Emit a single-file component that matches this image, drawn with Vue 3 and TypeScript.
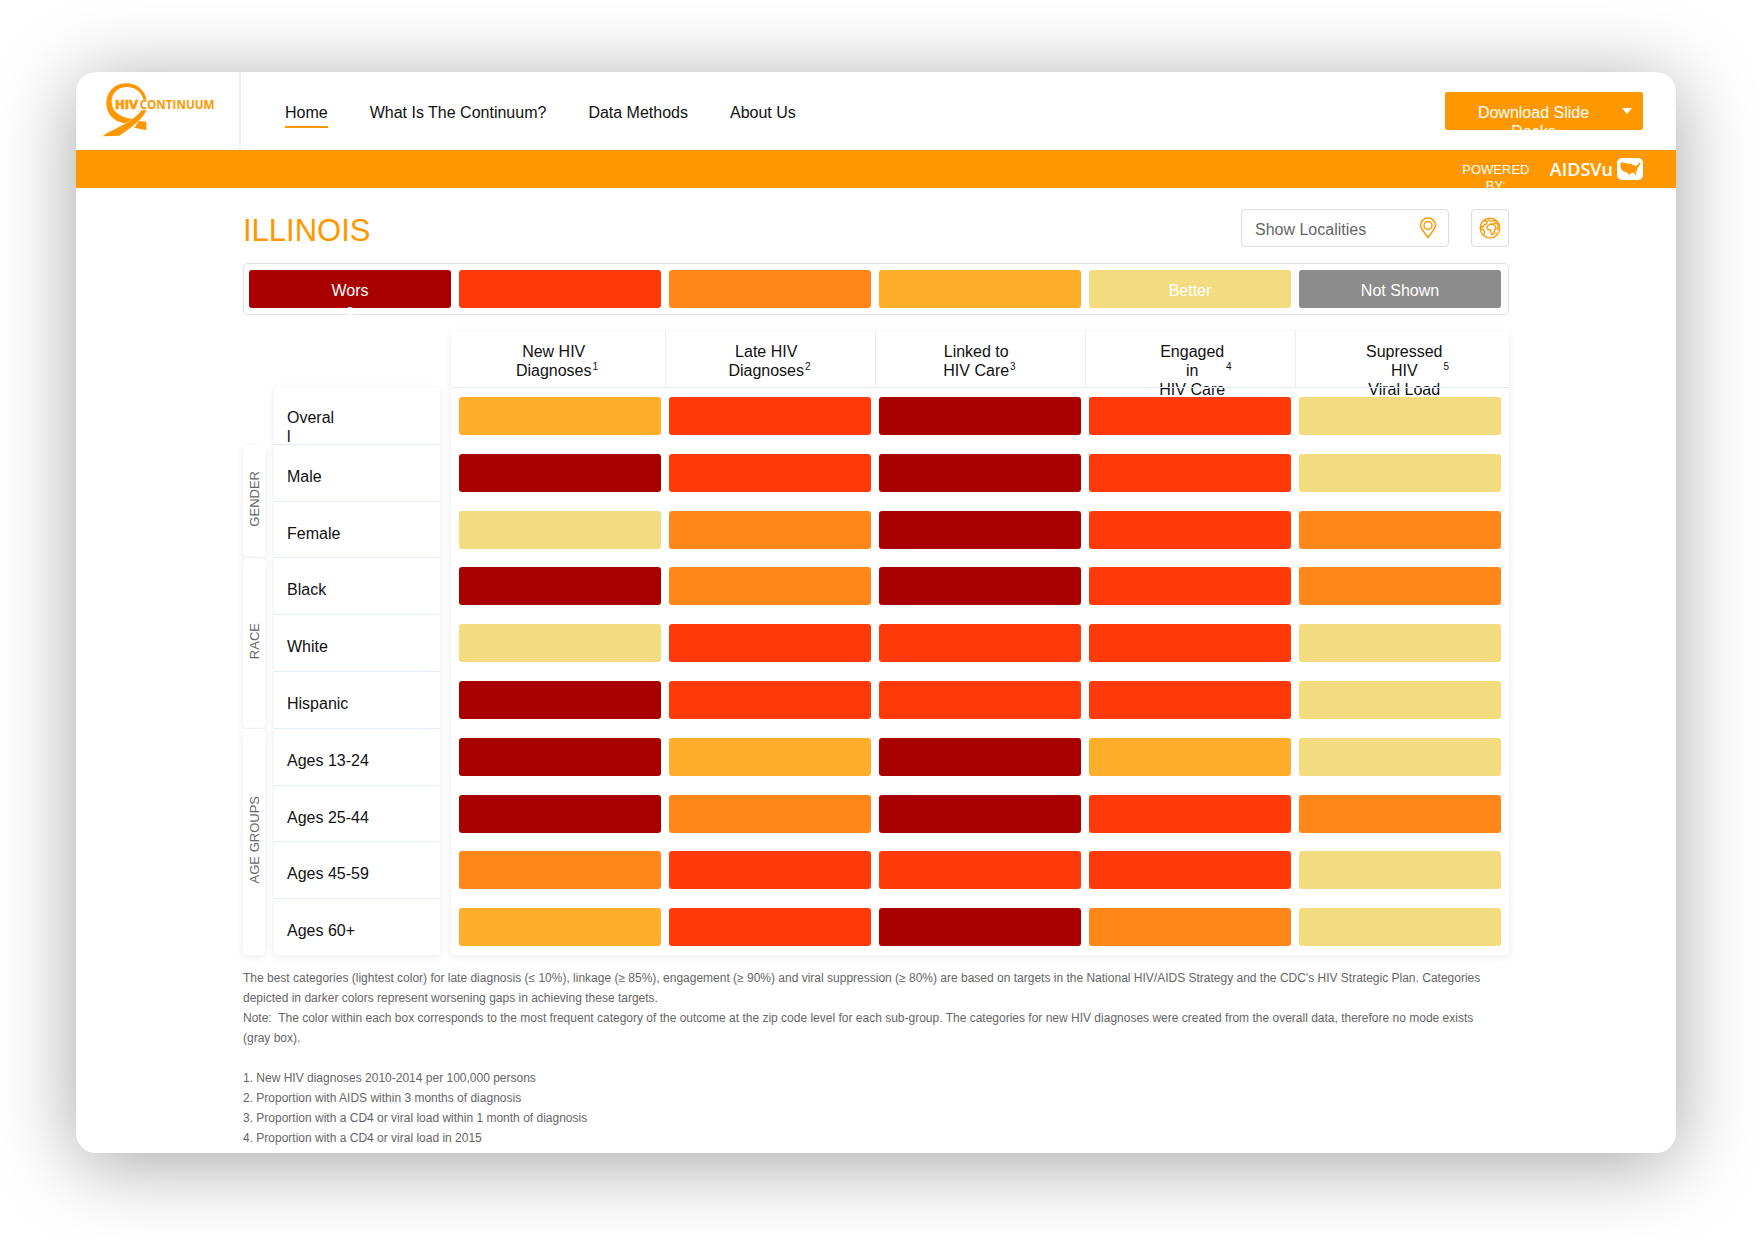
<script setup lang="ts">
type Level = 'worst' | 'bad' | 'fair' | 'good' | 'better' | 'none'

interface LegendItem {
  level: Level
  label: string
}

interface Column {
  lines: string[]
  note: number
  long?: boolean
}

interface Row {
  label: string
  group?: { name: string; span: number }
  cells: Level[]
}

const navItems: string[] = ['Home', 'What Is The Continuum?', 'Data Methods', 'About Us']

const legend: LegendItem[] = [
  { level: 'worst', label: 'Wors' },
  { level: 'bad', label: '' },
  { level: 'fair', label: '' },
  { level: 'good', label: '' },
  { level: 'better', label: 'Better' },
  { level: 'none', label: 'Not Shown' },
]

const columns: Column[] = [
  { lines: ['New HIV', 'Diagnoses'], note: 1 },
  { lines: ['Late HIV', 'Diagnoses'], note: 2 },
  { lines: ['Linked to', 'HIV Care'], note: 3 },
  { lines: ['Engaged', 'in', 'HIV Care'], note: 4, long: true },
  { lines: ['Supressed', 'HIV', 'Viral Load'], note: 5, long: true },
]

const rows: Row[] = [
  { label: 'Overall', cells: ['good', 'bad', 'worst', 'bad', 'better'] },
  { label: 'Male', group: { name: 'GENDER', span: 2 }, cells: ['worst', 'bad', 'worst', 'bad', 'better'] },
  { label: 'Female', cells: ['better', 'fair', 'worst', 'bad', 'fair'] },
  { label: 'Black', group: { name: 'RACE', span: 3 }, cells: ['worst', 'fair', 'worst', 'bad', 'fair'] },
  { label: 'White', cells: ['better', 'bad', 'bad', 'bad', 'better'] },
  { label: 'Hispanic', cells: ['worst', 'bad', 'bad', 'bad', 'better'] },
  { label: 'Ages 13-24', group: { name: 'AGE GROUPS', span: 4 }, cells: ['worst', 'good', 'worst', 'good', 'better'] },
  { label: 'Ages 25-44', cells: ['worst', 'fair', 'worst', 'bad', 'fair'] },
  { label: 'Ages 45-59', cells: ['fair', 'bad', 'bad', 'bad', 'better'] },
  { label: 'Ages 60+', cells: ['good', 'bad', 'worst', 'fair', 'better'] },
]

const footnotes: string[] = [
  '1. New HIV diagnoses 2010-2014 per 100,000 persons',
  '2. Proportion with AIDS within 3 months of diagnosis',
  '3. Proportion with a CD4 or viral load within 1 month of diagnosis',
  '4. Proportion with a CD4 or viral load in 2015',
]

// Grid lines: row 1 holds the column heads, columns 1-4 the group and row labels.
const rowLine = (index: number, span = 1) => ({ gridRow: `${index + 2} / span ${span}` })
const cellArea = (row: number, col: number) => ({ gridRow: row + 2, gridColumn: col + 5 })
</script>

<template>
  <div class="page">
    <div class="window">
      <header class="top">
        <a class="logo" href="#" aria-label="HIV Continuum">
          <svg width="115" height="55" viewBox="95 50 345 165">
            <path
              d="M229 103C223 74 199 54 168 54C133 54 108 80 108 114C108 146 132 171 165 174L186 161C150 157 124 138 124 110C124 83 143 65 169 65C195 65 214 80 219 103Z"
            />
            <path d="M206 167L228 169V195L192 187Z" />
            <path d="M213 135C206 147 193 157 172 171C143 189 110 200 97 213L147 211C181 188 218 162 228 134Z" />
            <text x="134" y="132" class="logo-hiv">HIV</text>
            <text x="208" y="132" class="logo-name">CONTINUUM</text>
          </svg>
        </a>
        <nav class="nav">
          <a v-for="(item, i) in navItems" :key="item" href="#" :class="{ active: i === 0 }">{{ item }}</a>
        </nav>
        <button class="download" type="button">
          <span class="download-text">Download Slide Decks</span>
          <svg width="10" height="6" viewBox="0 0 10 6"><path d="M0 0H10L5 6Z" fill="#fff" /></svg>
        </button>
      </header>

      <div class="powered">
        <span class="powered-text">POWERED BY:</span>
        <a class="aidsvu" href="#">
          <span>AIDSVu</span>
          <svg width="26" height="22" viewBox="0 0 78 66">
            <rect width="78" height="66" rx="15" fill="#fff" />
            <path
              d="M11 14L14 13L34 17L43 17L47 21L53 22L56 25L64 19L68 13L71 17L66 24L62 31L60 37L56 43L59 52L55 50L51 44L42 45L37 51L32 45L26 42L17 39L12 31L10 22Z"
              fill="#ff9800"
            />
          </svg>
        </a>
      </div>

      <main class="content">
        <div class="heading">
          <h1>ILLINOIS</h1>
          <button class="localities" type="button">
            <span>Show Localities</span>
            <svg width="18" height="22" viewBox="0 0 18 22" fill="none" stroke="#ff9800" stroke-width="1.5">
              <path d="M9 20.5C6 16 1.5 12 1.5 8.300A7.500 7.300 0 0 1 16.500 8.300C16.500 12 12 16 9 20.500Z" />
              <circle cx="9" cy="8.500" r="4" />
            </svg>
          </button>
          <button class="globe" type="button" aria-label="Map">
            <svg width="22" height="22" viewBox="0 0 22 22" fill="none" stroke="#ff9800" stroke-width="1.300" stroke-linejoin="round">
              <circle cx="11" cy="11" r="9.800" />
              <path d="M4.500 3.800L7 3.500L8.500 5L7.500 7L5.500 7.500L4.500 9.500L2.500 10L1.500 9" />
              <path d="M1.500 12L4 12.500L5.500 14.500L5 17L4.500 18.300" />
              <path d="M10 1.500L9.800 3.500L12 4.500L14 3.500L17.500 4L18.500 5.500" />
              <path d="M9 8.500L11.500 7L14.500 7.500L16 9L17 11.500L15.500 13.500L15 16L13 18L12 15.500L11.500 13L9 12.500L8 10.500Z" />
              <path d="M14.500 7.500L15.500 6L18 6.500L19.500 9L18.500 11L17 11.500M18.500 11L19.500 13.500M16.500 17L17.500 15.500" />
            </svg>
          </button>
        </div>

        <ul class="legend">
          <li v-for="item in legend" :key="item.level" :class="['swatch', item.level]">{{ item.label }}</li>
        </ul>

        <table class="matrix">
          <thead>
            <tr>
              <th v-for="col in columns" :key="col.note" scope="col" :class="['col-head', { long: col.long }]">
                <span class="col-name">
                  <span v-for="line in col.lines" :key="line">{{ line }}</span>
                </span>
                <sup>{{ col.note }}</sup>
              </th>
            </tr>
          </thead>
          <tbody>
            <tr v-for="(row, r) in rows" :key="row.label">
              <th
                v-if="row.group"
                scope="rowgroup"
                class="group"
                :rowspan="row.group.span"
                :style="rowLine(r, row.group.span)"
              >
                <span>{{ row.group.name }}</span>
              </th>
              <th scope="row" class="row-head" :style="rowLine(r)">{{ row.label }}</th>
              <td v-for="(level, c) in row.cells" :key="c" class="cell" :style="cellArea(r, c)">
                <div :class="['bar', level]"></div>
              </td>
            </tr>
          </tbody>
        </table>

        <div class="notes">
          <p>
            The best categories (lightest color) for late diagnosis (≤ 10%), linkage (≥ 85%), engagement (≥ 90%) and
            viral suppression (≥ 80%) are based on targets in the National HIV/AIDS Strategy and the CDC's HIV Strategic
            Plan. Categories depicted in darker colors represent worsening gaps in achieving these targets.
          </p>
          <p>
            Note:&nbsp; The color within each box corresponds to the most frequent category of the outcome at the zip
            code level for each sub-group. The categories for new HIV diagnoses were created from the overall data,
            therefore no mode exists (gray box).
          </p>
          <ul>
            <li v-for="note in footnotes" :key="note">{{ note }}</li>
          </ul>
        </div>
      </main>
    </div>
  </div>
</template>

<style>
body {
  margin: 0;
  background: #fff;
}
</style>

<style scoped>
* {
  box-sizing: border-box;
}

.page {
  padding: 72px 84px 88px 76px;
  font-family: 'Liberation Sans', Arial, Helvetica, sans-serif;
  font-size: 16px;
  line-height: 19px;
  color: #111;
}

.window {
  background: #fff;
  border-radius: 20px;
  box-shadow: 0 10px 80px rgba(0, 0, 0, 0.36);
  overflow: hidden;
}

a {
  color: inherit;
  text-decoration: none;
}

button {
  font: inherit;
  padding: 0;
  cursor: pointer;
}

ul {
  list-style: none;
  margin: 0;
  padding: 0;
}

/* header */
.top {
  display: flex;
  align-items: center;
  height: 78px;
  padding-right: 33px;
}

.logo {
  display: flex;
  align-items: flex-start;
  width: 165px;
  height: 100%;
  padding: 10px 0 0 26px;
  border-right: 2px solid #eef2ff;
}

.logo svg {
  fill: #ff9800;
}

.logo-hiv {
  font: bold 35px 'DejaVu Sans', sans-serif;
  stroke: #ff9800;
  stroke-width: 2px;
}

.logo-name {
  font: bold 35px 'Open Sans', sans-serif;
}

.nav {
  display: flex;
  gap: 42px;
  margin: 8px auto 0 44px;
}

.nav a {
  padding-bottom: 4px;
  border-bottom: 2px solid transparent;
}

.nav a.active {
  border-color: #ff9800;
}

.download {
  display: flex;
  gap: 23px;
  width: 198px;
  height: 38px;
  padding: 11px 11px 0 23px;
  border: 0;
  border-radius: 2px;
  background: #ff9800;
  color: #fff;
  overflow: hidden;
}

.download-text {
  flex: 1;
}

.download svg {
  margin-top: 5px;
}

.powered {
  display: flex;
  justify-content: flex-end;
  gap: 16px;
  height: 38px;
  padding-right: 33px;
  background: #ff9800;
  color: #fff;
  overflow: hidden;
}

.powered-text {
  width: 76px;
  padding-top: 12px;
  font-size: 13px;
  line-height: 16px;
  text-align: center;
}

.aidsvu {
  display: flex;
  align-items: center;
  gap: 4px;
  font: 600 18px 'Open Sans', sans-serif;
}

/* content */
.content {
  padding: 21px 167px 5px;
}

.heading {
  display: flex;
  align-items: flex-start;
}

h1 {
  margin: 0 auto 0 0;
  font-size: 31px;
  font-weight: 400;
  line-height: 44px;
  color: #ff9800;
}

.localities,
.globe {
  display: flex;
  align-items: center;
  height: 38px;
  border: 1px solid #ddd;
  border-radius: 4px;
  background: #fff;
}

.localities {
  justify-content: space-between;
  width: 208px;
  margin-right: 22px;
  padding: 0 11px 0 13px;
  line-height: 21px;
  color: #666;
}

.localities span {
  padding-top: 2px;
}

.globe {
  justify-content: center;
  width: 38px;
}

.legend {
  display: grid;
  grid-template-columns: repeat(6, 1fr);
  gap: 8px;
  margin-top: 10px;
  padding: 6px 7px 6px 5px;
  border: 1px solid #e2e2e2;
  border-radius: 4px;
}

.swatch {
  position: relative;
  height: 38px;
  border-radius: 3px;
  line-height: 42px;
  text-align: center;
  color: #fff;
}

.swatch:first-child::after {
  content: '';
  position: absolute;
  left: 50%;
  bottom: -7px;
  width: 8px;
  height: 8px;
  margin-left: -4px;
  border-radius: 4px;
  background: #fff;
}

.worst {
  background: #a90000;
}

.bad {
  background: #ff3a08;
}

.fair {
  background: #ff871a;
}

.good {
  background: #ffae2b;
}

.better {
  background: #f3db80;
}

.none {
  background: #8c8c8c;
}

/* matrix */
.matrix {
  display: grid;
  grid-template-columns: 22px 9px 166px 11px 107fr 105fr 105fr 105fr 107fr;
  grid-template-rows: 56px repeat(10, minmax(0, 1fr));
  height: 624px;
  margin-top: 16px;
}

.matrix thead,
.matrix tbody,
.matrix tr {
  display: contents;
}

.matrix th {
  font-weight: 400;
}

.matrix th,
.matrix td {
  padding: 0;
}

.matrix::before,
.matrix::after {
  content: '';
  order: -1;
  border-radius: 4px;
  background: #fff;
  box-shadow: 0 2px 8px rgba(0, 0, 0, 0.08);
}

.matrix::before {
  grid-area: 1 / 5 / -1 / -1;
}

.matrix::after {
  grid-area: 2 / 3 / -1 / 4;
}

.matrix .col-head {
  grid-row: 1;
  display: flex;
  justify-content: center;
  gap: 1px;
  padding: 11px 2px 0 0;
  border-left: 1px solid #e6ecfb;
}

.matrix .col-head:first-child {
  border-left: 0;
}

.matrix .col-head:nth-child(1) {
  grid-column: 5;
}

.matrix .col-head:nth-child(2) {
  grid-column: 6;
}

.matrix .col-head:nth-child(3) {
  grid-column: 7;
}

.matrix .col-head:nth-child(4) {
  grid-column: 8;
}

.matrix .col-head:nth-child(5) {
  grid-column: 9;
}

.matrix .col-head.long {
  padding-left: 12px;
}

.col-name {
  display: flex;
  flex-direction: column;
  align-items: center;
  height: 38px;
}

sup {
  margin-top: 19px;
  font-size: 10px;
  line-height: 12px;
}

.matrix .group {
  grid-column: 1;
  display: flex;
  align-items: center;
  justify-content: center;
  margin-top: 1px;
  padding-bottom: 5px;
  border-radius: 4px;
  background: #fff;
  box-shadow: 0 2px 8px rgba(0, 0, 0, 0.08);
  font-size: 13px;
  color: #666;
}

.group span {
  writing-mode: vertical-rl;
  transform: rotate(180deg);
  white-space: nowrap;
}

.matrix .row-head {
  grid-column: 3;
  padding: 22px 0 0 13px;
  border-top: 1px solid #e3ecfa;
  text-align: left;
}

.matrix tbody tr:first-child .row-head {
  padding: 20px 105px 0 13px;
  border-top-color: transparent;
  word-break: break-all;
}

.matrix .cell {
  padding: 10px 4px 0;
}

.matrix .cell:nth-last-child(5) {
  padding-left: 8px;
}

.matrix .cell:last-child {
  padding-right: 8px;
}

.matrix tbody tr:first-child .cell {
  padding-top: 9px;
  border-top: 1px solid #e3eafa;
}

.bar {
  height: 38px;
  border-radius: 3px;
}

/* notes */
.notes {
  margin-top: 13px;
  padding-right: 8px;
  font-size: 12px;
  line-height: 20px;
  color: #666;
}

.notes p {
  margin: 0;
}

.notes ul {
  margin-top: 20px;
}
</style>
